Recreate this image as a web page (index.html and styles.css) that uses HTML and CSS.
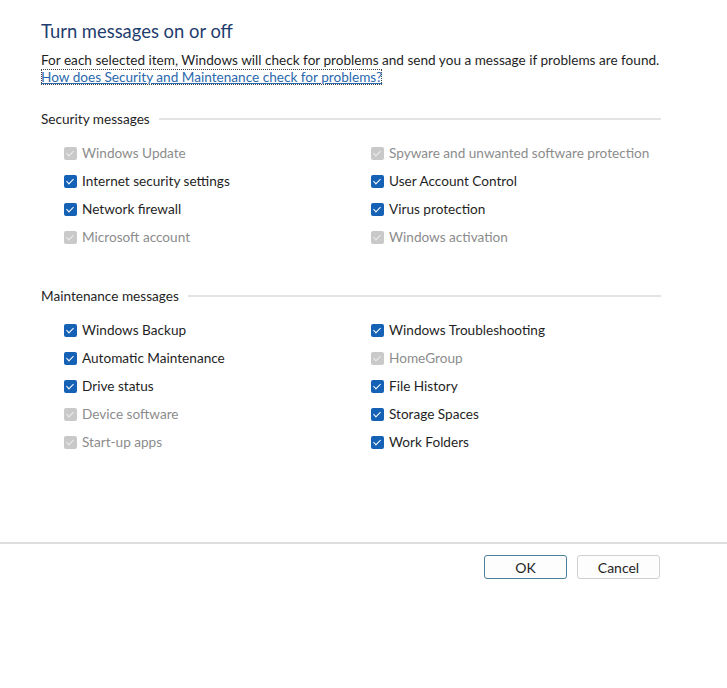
FILE: index.html
```html
<!DOCTYPE html>
<html lang="en">
<head>
    <meta charset="UTF-8">
    <title>Turn messages on or off</title>
    <link rel="stylesheet" href="styles.css">
</head>
<body>
    <div class="content">
        <div class="title">Turn messages on or off</div>
        <div class="desc">For each selected item, Windows will check for problems and send you a message if problems are found.</div>
        <a class="help-link" href="#">How does Security and Maintenance check for problems?</a>

        <div class="group group-security">
            <div class="group-head"><span>Security messages</span><div class="rule"></div></div>
            <div class="items">
                <div class="item disabled"><span class="box"></span>Windows Update</div>
                <div class="item disabled"><span class="box"></span>Spyware and unwanted software protection</div>
                <div class="item"><span class="box"></span>Internet security settings</div>
                <div class="item"><span class="box"></span>User Account Control</div>
                <div class="item"><span class="box"></span>Network firewall</div>
                <div class="item"><span class="box"></span>Virus protection</div>
                <div class="item disabled"><span class="box"></span>Microsoft account</div>
                <div class="item disabled"><span class="box"></span>Windows activation</div>
            </div>
        </div>

        <div class="group group-maint">
            <div class="group-head"><span>Maintenance messages</span><div class="rule"></div></div>
            <div class="items">
                <div class="item"><span class="box"></span>Windows Backup</div>
                <div class="item"><span class="box"></span>Windows Troubleshooting</div>
                <div class="item"><span class="box"></span>Automatic Maintenance</div>
                <div class="item disabled"><span class="box"></span>HomeGroup</div>
                <div class="item"><span class="box"></span>Drive status</div>
                <div class="item"><span class="box"></span>File History</div>
                <div class="item disabled"><span class="box"></span>Device software</div>
                <div class="item"><span class="box"></span>Storage Spaces</div>
                <div class="item disabled"><span class="box"></span>Start-up apps</div>
                <div class="item"><span class="box"></span>Work Folders</div>
            </div>
        </div>
    </div>
    <div class="footer">
        <button class="btn btn-ok">OK</button>
        <button class="btn">Cancel</button>
    </div>
</body>
</html>
```

FILE: styles.css
```css
html,
body {
    margin: 0;
    background-color: #FFF;
    font-family: 'Lato', 'Noto Sans', sans-serif;
    font-size: 13.6px;
    color: #1f1f1f;
}

.content {
    height: 542px;
    padding-left: 41px;
    padding-right: 66px;
    box-sizing: border-box;
    padding-top: 19px;
}

.title {
    font-size: 18.4px;
    color: #1f3d6e;
    line-height: 24px;
    margin-bottom: 8px;
}

.desc {
    line-height: 18px;
    white-space: nowrap;
}

.help-link {
    display: inline-block;
    color: #2a68ad;
    line-height: 16px;
    outline: 1px dotted #444;
    outline-offset: -1px;
}

.group-security {
    margin-top: 24px;
}

.group-maint {
    margin-top: 35px;
}

.group-head {
    display: flex;
    align-items: center;
    height: 20px;
}

.rule {
    flex: 1;
    height: 2px;
    background-color: #e3e3e3;
    margin-left: 9px;
}

.items {
    display: grid;
    grid-template-columns: 307px 1fr;
    padding-left: 23px;
    padding-top: 10px;
}

.item {
    display: flex;
    align-items: center;
    height: 28px;
    white-space: nowrap;
}

.box {
    width: 13px;
    height: 13px;
    border-radius: 2px;
    background-color: #1561b5;
    margin-right: 5px;
    position: relative;
    flex: none;
}

.box::after {
    content: '';
    position: absolute;
    left: 4px;
    top: 2px;
    width: 3px;
    height: 6px;
    border-right: 1.5px solid #FFF;
    border-bottom: 1.5px solid #FFF;
    transform: rotate(45deg);
}

.item.disabled {
    color: #8c8c8c;
}

.item.disabled .box {
    background-color: #c9c9c9;
}

.item.disabled .box::after {
    border-color: #ececec;
}

.footer {
    border-top: 2px solid #dedede;
    display: flex;
    justify-content: flex-end;
    gap: 10px;
    padding-top: 11px;
    padding-right: 67px;
}

.btn {
    width: 83px;
    height: 24px;
    font-family: inherit;
    font-size: 14px;
    color: #1f1f1f;
    background-color: #FDFDFD;
    border: 1px solid #d0d0d0;
    border-radius: 3px;
    padding: 0;
}

.btn-ok {
    border-color: #4a7f9e;
}
```
